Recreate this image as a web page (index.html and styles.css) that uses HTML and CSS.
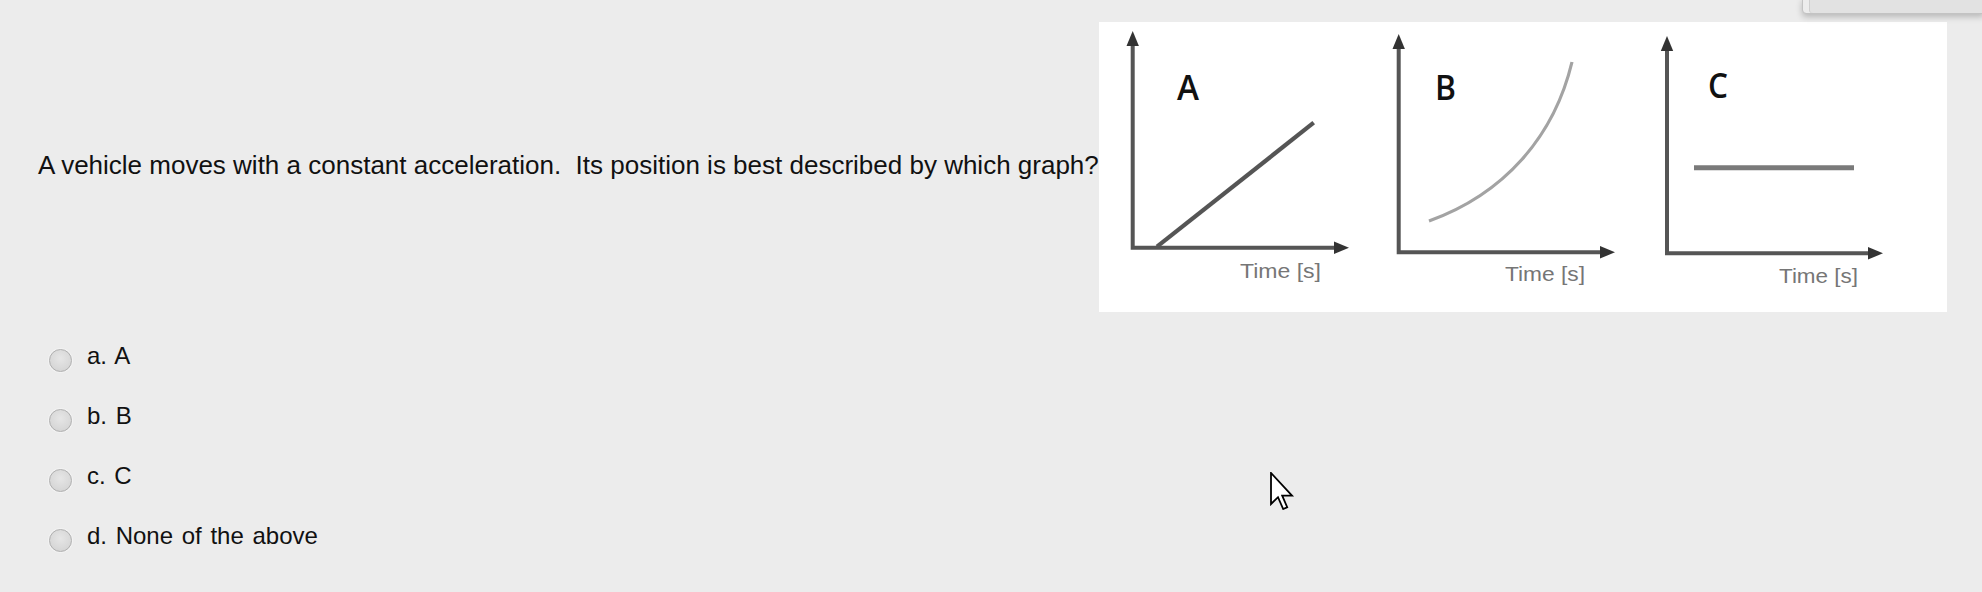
FILE: index.html
```html
<!DOCTYPE html>
<html>
<head>
<meta charset="utf-8">
<link rel="stylesheet" href="styles.css">
</head>
<body>
<div class="page">
  <div class="toppanel"></div>
  <p class="question">A vehicle moves with a constant acceleration.&nbsp; Its position is best described by which graph?<svg class="graphs" width="848" height="290" viewBox="0 0 848 290" xmlns="http://www.w3.org/2000/svg">
      <rect x="0" y="0" width="848" height="290" fill="#ffffff"/>
      <g stroke="#555555" stroke-width="4" fill="none" stroke-linecap="butt">
        <path d="M33.7 20 V225.7 H238"/>
        <path d="M299.7 24 V230.3 H504"/>
        <path d="M568 26 V231.3 H772"/>
      </g>
      <g fill="#333333">
        <polygon points="33.7,9 27.5,24 39.9,24"/>
        <polygon points="250,225.7 235,219.5 235,231.9"/>
        <polygon points="299.7,12 293.5,27 305.9,27"/>
        <polygon points="516,230.3 501,224.1 501,236.5"/>
        <polygon points="568,14 561.8,29 574.2,29"/>
        <polygon points="784,231.3 769,225.1 769,237.5"/>
      </g>
      <line x1="58" y1="224.7" x2="214.7" y2="100.7" stroke="#555555" stroke-width="4.2"/>
      <path d="M330 199 C 405 172 455 115 473 40" stroke="#a3a3a3" stroke-width="3.2" fill="none"/>
      <line x1="595" y1="145.7" x2="755" y2="145.7" stroke="#7a7a7a" stroke-width="5"/>
      <g class="letter">
        <text x="78" y="78" textLength="22" lengthAdjust="spacingAndGlyphs">A</text>
        <text x="336" y="78" textLength="21" lengthAdjust="spacingAndGlyphs">B</text>
        <text x="609" y="75.5" textLength="20" lengthAdjust="spacingAndGlyphs">C</text>
      </g>
      <g class="time">
        <text x="141" y="256" textLength="81" lengthAdjust="spacingAndGlyphs">Time [s]</text>
        <text x="406" y="259" textLength="80" lengthAdjust="spacingAndGlyphs">Time [s]</text>
        <text x="680" y="261" textLength="79" lengthAdjust="spacingAndGlyphs">Time [s]</text>
      </g>
    </svg></p>
  <ul class="options">
    <li class="option"><span class="radio"></span>a. A</li>
    <li class="option"><span class="radio"></span>b. B</li>
    <li class="option"><span class="radio"></span>c. C</li>
    <li class="option"><span class="radio"></span>d. None of the above</li>
  </ul>
  <svg class="cursor" width="25" height="38" viewBox="0 0 12.5 19" xmlns="http://www.w3.org/2000/svg">
    <path d="M0.5 0.5 V16 L4 12.6 L6.6 18.5 L8.6 17.6 L6.1 11.8 H11 Z" fill="#ffffff" stroke="#000000" stroke-width="0.9" stroke-linejoin="miter"/>
  </svg>
</div>
</body>
</html>
```

FILE: styles.css
```css
html, body {
  margin: 0;
  padding: 0;
  background: #ececec;
}

.page {
  position: relative;
  width: 1982px;
  height: 592px;
  overflow: hidden;
  font-family: "Liberation Sans", Arial, sans-serif;
  color: #111111;
}

.question {
  margin: 0;
  padding: 22px 0 0 38px;
  font-size: 26px;
  white-space: nowrap;
  line-height: 1.15;
}

.graphs {
  display: inline-block;
  vertical-align: middle;
}

.letter text {
  font-family: "Open Sans", "Liberation Sans", sans-serif;
  font-size: 34px;
  font-weight: 600;
  fill: #111111;
}

.time text {
  font-family: "Liberation Sans", Arial, sans-serif;
  font-size: 21px;
  fill: #767676;
}

.options {
  list-style: none;
  margin: 14px 0 0 0;
  padding: 0 0 0 49px;
}

.option {
  height: 60px;
  line-height: 60px;
  font-size: 24px;
  word-spacing: 2px;
  white-space: nowrap;
}

.radio {
  display: inline-block;
  width: 21px;
  height: 21px;
  border-radius: 50%;
  border: 1px solid #b0b0b0;
  background: radial-gradient(circle at 50% 40%, #e6e6e6 0%, #d9d9d9 60%, #cfcfcf 100%);
  box-shadow: 0 0 0 1px #f3f3f3;
  vertical-align: -8px;
  margin-right: 15px;
}

.toppanel {
  position: absolute;
  top: -2px;
  right: -2px;
  width: 180px;
  height: 14px;
  background: #e2e2e2;
  border: 1px solid #c3c3c3;
  border-bottom-left-radius: 4px;
  box-shadow: 0 3px 6px rgba(0, 0, 0, 0.22), inset 6px 0 0 #ececec, inset 7px 0 0 #cfcfcf;
}

.cursor {
  position: absolute;
  left: 1270px;
  top: 472px;
}
```
